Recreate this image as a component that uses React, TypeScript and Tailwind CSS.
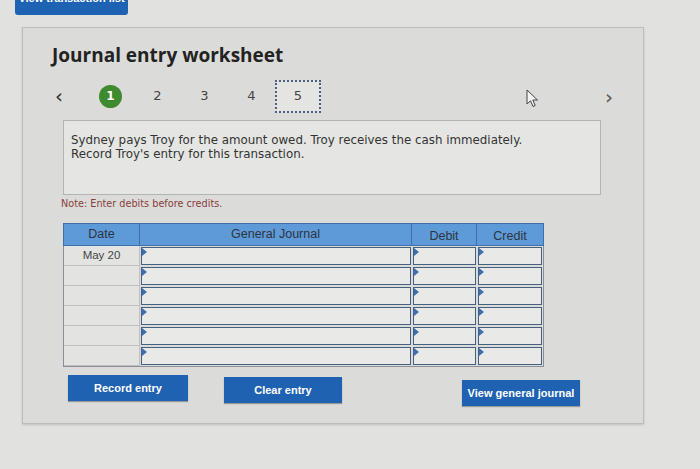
import React from 'react'

const rows = [0, 1, 2, 3, 4, 5]
const arial = { fontFamily: '"Liberation Sans", Arial, sans-serif' }

function Marker() {
  return (
    <span className="absolute left-0 top-0 w-0 h-0 border-t-[4px] border-b-[4px] border-l-[5px] border-t-transparent border-b-transparent border-l-[#3d6fb0]" />
  )
}

function InputCell({ w }: { w: string }) {
  return (
    <div className={`${w} h-[20px] p-[1px]`}>
      <div className="relative w-full h-full bg-[#e9eae7] border-[1.5px] border-[#46617f]">
        <Marker />
      </div>
    </div>
  )
}

function Step({ children }: { children: React.ReactNode }) {
  return <div className="w-[47px] flex items-center justify-center">{children}</div>
}

function BlueButton({ label, className }: { label: string; className: string }) {
  return (
    <button className={`${className} h-[26px] bg-[#1f62b2] text-white text-[11px] font-bold shadow-[0_1px_1px_rgba(0,0,0,0.3)]`} style={arial}>
      {label}
    </button>
  )
}

export default function App() {
  return (
    <div className="w-[700px] h-[469px] bg-[#e1e1df] overflow-hidden" style={{ fontFamily: '"DejaVu Sans", Verdana, sans-serif' }}>
      <div className="ml-[15px] -mt-[20px] w-[113px] h-[35px] bg-[#1d62b3] rounded-b-[3px] flex items-end justify-center pb-[9px]">
        <span className="text-white text-[11px] font-bold" style={arial}>View transaction list</span>
      </div>

      <div className="ml-[22px] mt-[12px] w-[622px] h-[397px] bg-[#dbdcd9] border border-[#bdbdbb] shadow-[0_1px_2px_rgba(0,0,0,0.15)]">
        <h1 className="ml-[29px] mt-[15px] text-[19px] font-bold text-[#222] leading-[24px]" style={{ fontFamily: '"Open Sans", sans-serif' }}>
          Journal entry worksheet
        </h1>

        <div className="h-[40px] mt-[12px] pl-[32px] pr-[30px] flex items-center text-[13px] text-[#444]">
          <span className="w-[10px] text-[20px] leading-[20px] text-[#333] -mt-[6px]">&#8249;</span>
          <div className="ml-[22px] flex items-stretch h-[33px] -mt-[6px]">
            <Step>
              <span className="w-[23px] h-[23px] rounded-full bg-[#3f8a2e] text-white text-[12px] font-bold flex items-center justify-center">1</span>
            </Step>
            <Step>2</Step>
            <Step>3</Step>
            <Step>4</Step>
            <div className="w-[46px] border-2 border-dotted border-[#4a5f80] bg-[#e4e5e2] flex items-center justify-center">5</div>
          </div>
          <div className="flex-1" />
          <svg className="-mt-[2px]" width="13" height="19" viewBox="0 0 13 19">
            <path d="M1 1 L1 15 L4.5 11.8 L7 17.5 L9.2 16.5 L6.8 11 L11.5 11 Z" fill="#f2f2f2" stroke="#444" strokeWidth="1" strokeLinejoin="round" />
          </svg>
          <span className="ml-[66px] text-[20px] leading-[20px] text-[#555] -mt-[4px]">&#8250;</span>
        </div>

        <div className="ml-[40px] mt-[1px] w-[538px] h-[75px] bg-[#e5e6e3] border border-[#b3b4b1] px-[7px] pt-[13px] text-[11.85px] leading-[13.5px] text-[#333]">
          <p>Sydney pays Troy for the amount owed. Troy receives the cash immediately.</p>
          <p>Record Troy's entry for this transaction.</p>
        </div>

        <p className="ml-[38px] mt-[3px] text-[9.7px] leading-[12px] text-[#8a3c3c]">Note: Enter debits before credits.</p>

        <div className="ml-[40px] mt-[13px] w-[481px]">
          <div className="flex h-[23px] bg-[#5e9ad8] border border-[#3f6fa8] text-[12.5px] text-[#2c3440]" style={arial}>
            <div className="w-[76px] flex items-center justify-center border-r border-[#3f6fa8]">Date</div>
            <div className="w-[272px] flex items-center justify-center border-r border-[#3f6fa8]">General Journal</div>
            <div className="w-[65px] flex items-center justify-center border-r border-[#3f6fa8] pt-[3px]">Debit</div>
            <div className="flex-1 flex items-center justify-center pt-[3px]">Credit</div>
          </div>
          <div className="border-x border-b border-[#8a8f96]">
            {rows.map((r) => (
              <div key={r} className="flex">
                <div className="w-[76px] h-[20px] bg-[#e3e4e1] border-b border-r border-[#bfc0bd] flex items-center justify-center text-[11.5px] text-[#444]" style={arial}>
                  {r === 0 ? 'May 20' : ''}
                </div>
                <InputCell w="w-[272px]" />
                <InputCell w="w-[65px]" />
                <InputCell w="flex-1" />
              </div>
            ))}
          </div>
        </div>

        <div className="mt-[8px] pl-[45px] flex items-start">
          <BlueButton label="Record entry" className="w-[120px]" />
          <BlueButton label="Clear entry" className="ml-[36px] mt-[2px] w-[118px]" />
          <BlueButton label="View general journal" className="ml-[120px] mt-[5px] w-[118px]" />
        </div>
      </div>
    </div>
  )
}
